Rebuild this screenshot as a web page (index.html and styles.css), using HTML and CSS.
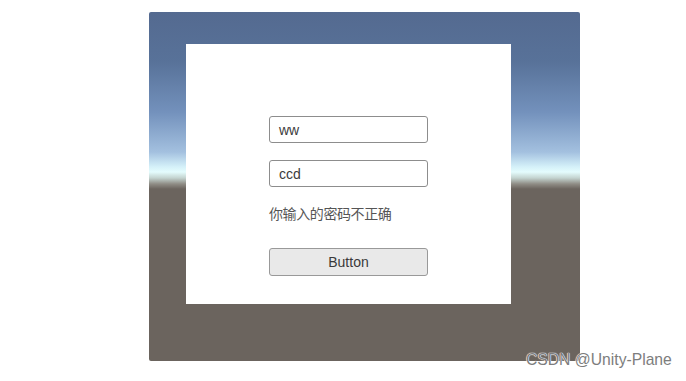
FILE: index.html
```html
<!DOCTYPE html>
<html lang="zh">
<head>
<meta charset="utf-8">
<title>Login</title>
<link rel="stylesheet" href="styles.css">
</head>
<body>
<div class="scene">
  <div class="panel">
    <div class="form">
      <div class="field">ww</div>
      <div class="field">ccd</div>
      <div class="message">你输入的密码不正确</div>
      <div class="button">Button</div>
    </div>
  </div>
</div>
<div class="watermark">CSDN @Unity-Plane</div>
</body>
</html>
```
FILE: styles.css
```css
html, body {
  margin: 0;
  padding: 0;
  background: #ffffff;
  width: 686px;
  height: 381px;
  overflow: hidden;
  font-family: "Liberation Sans", Arial, "Noto Sans CJK SC", sans-serif;
}
body {
  position: relative;
  padding-top: 12px;
  padding-left: 149px;
  box-sizing: border-box;
}
.scene {
  width: 431px;
  height: 349px;
  border-radius: 2px;
  box-sizing: border-box;
  padding: 32px 0 0 37px;
  background: linear-gradient(to bottom,
    #546a90 0px,
    #587299 50px,
    #7391bc 100px,
    #a3c0df 140px,
    #d5f1f9 155px,
    #e4fcfd 160px,
    #c3d3cf 166px,
    #8f8c85 172px,
    #6b645e 177px,
    #6b645e 349px);
}
.panel {
  width: 325px;
  height: 260px;
  background: #ffffff;
  box-sizing: border-box;
  padding: 72px 0 0 83px;
}
.form {
  display: flex;
  flex-direction: column;
  width: 159px;
}
.field {
  height: 27px;
  box-sizing: border-box;
  border: 1px solid #8d8d8d;
  border-radius: 3px;
  background: #ffffff;
  padding-left: 9px;
  font-size: 14px;
  line-height: 26px;
  color: #3c3c3c;
  margin-bottom: 17px;
}
.field + .field {
  margin-bottom: 16px;
}
.message {
  font-size: 14px;
  line-height: 20px;
  color: #555555;
  font-family: "Noto Sans CJK SC", sans-serif;
  margin-bottom: 25px;
  letter-spacing: -0.4px;
}
.button {
  height: 28px;
  box-sizing: border-box;
  border: 1px solid #999999;
  border-radius: 3px;
  background: #e9e9e9;
  text-align: center;
  font-size: 14px;
  line-height: 26px;
  color: #3a3a3a;
}
.watermark {
  position: absolute;
  left: 526px;
  top: 351px;
  font-size: 15.7px;
  line-height: 18px;
  color: #7d7d7d;
  text-shadow: 0 0 1px #ffffff, 0 0 1px #ffffff, 0 0 1px #ffffff;
}
```
